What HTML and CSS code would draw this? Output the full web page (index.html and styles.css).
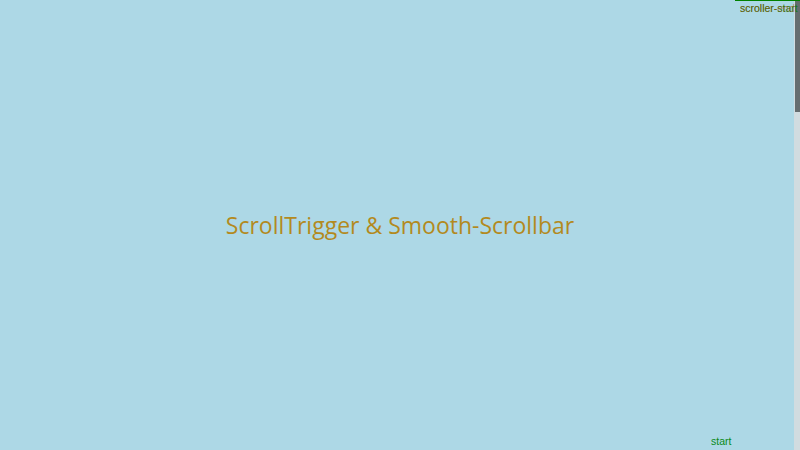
FILE: index.html
```html
<!DOCTYPE html>
<html lang="en">
<head>
<meta charset="UTF-8" />
<meta name="viewport" content="width=device-width, initial-scale=1" />
<title>ScrollTrigger &amp; Smooth-Scrollbar</title>
<link rel="stylesheet" href="styles.css">
</head>
<body>

<div class="scroller">
  <section class="panel">
    <h1 class="title">ScrollTrigger &amp; Smooth-Scrollbar</h1>
  </section>

  <!-- scrollbar track + thumb -->
  <div class="track"><div class="thumb"></div></div>
</div>

<!-- debug markers -->
<div class="marker scroller-start">scroller-start</div>
<div class="marker scroller-end">scroller-end</div>
<div class="marker start">start</div>

</body>
</html>
```

FILE: styles.css
```css
html, body { margin: 0; height: 100%; overflow: hidden; }
body { font-family: "Liberation Sans", Arial, sans-serif; background: #add8e6; }
.scroller { position: relative; height: 100%; }
.panel { height: 450px; display: flex; align-items: center; justify-content: center; }
.title { margin: 0; font-family: "Open Sans", sans-serif; font-weight: 400; font-size: 23px; color: #b38a1e; }

.track { position: absolute; top: 0; right: 0; width: 6px; height: 100%; background: rgba(222,222,222,0.75); }
.thumb { width: 5px; height: 112px; margin-left: 1px; background: #656d70; }

.marker { position: absolute; font-size: 10.5px; line-height: 12px; white-space: nowrap; z-index: 10; }
.scroller-start { top: 0; right: 0; width: 54px; padding: 1px 6px 0 5px; color: #1a7a1a; border-top: 1px solid green; }
.scroller-end { top: 2px; left: 740px; color: rgba(180,70,0,0.5); }
.start { top: 435px; left: 711px; color: #0a8a1a; }
```
